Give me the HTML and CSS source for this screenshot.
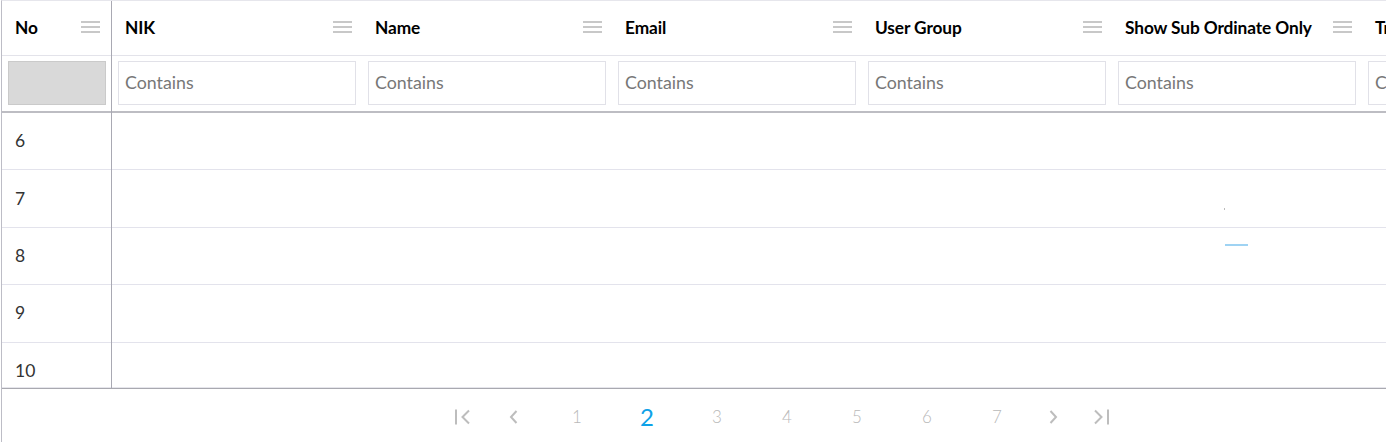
FILE: index.html
```html
<!DOCTYPE html>
<html>
<head>
<meta charset="utf-8">
<link rel="stylesheet" href="styles.css">
</head>
<body>
<div class="grid">
  <div class="table">
    <div class="pinned">
      <div class="hcell"><span class="htext">No</span><span class="menu"><i></i><i></i><i></i></span></div>
      <div class="fcell"><div class="fbox-disabled"></div></div>
      <div class="rows">
        <div class="row"><span class="num">6</span></div>
        <div class="row"><span class="num">7</span></div>
        <div class="row"><span class="num">8</span></div>
        <div class="row"><span class="num">9</span></div>
        <div class="row"><span class="num">10</span></div>
      </div>
    </div>
    <div class="center">
      <div class="hrow">
        <div class="hcell col"><span class="htext">NIK</span><span class="menu"><i></i><i></i><i></i></span></div>
        <div class="hcell col"><span class="htext">Name</span><span class="menu"><i></i><i></i><i></i></span></div>
        <div class="hcell col"><span class="htext">Email</span><span class="menu"><i></i><i></i><i></i></span></div>
        <div class="hcell col"><span class="htext">User Group</span><span class="menu"><i></i><i></i><i></i></span></div>
        <div class="hcell col"><span class="htext">Show Sub Ordinate Only</span><span class="menu"><i></i><i></i><i></i></span></div>
        <div class="hcell col"><span class="htext">Transaction</span><span class="menu"><i></i><i></i><i></i></span></div>
      </div>
      <div class="frow">
        <div class="fcell col"><input class="finput" placeholder="Contains"></div>
        <div class="fcell col"><input class="finput" placeholder="Contains"></div>
        <div class="fcell col"><input class="finput" placeholder="Contains"></div>
        <div class="fcell col"><input class="finput" placeholder="Contains"></div>
        <div class="fcell col"><input class="finput" placeholder="Contains"></div>
        <div class="fcell col"><input class="finput" placeholder="Contains"></div>
      </div>
      <div class="rows">
        <div class="row"></div>
        <div class="row"></div>
        <div class="row"></div>
        <div class="row"></div>
        <div class="row"></div>
      </div>
      <span class="artifact-dot"></span>
      <span class="artifact-line"></span>
    </div>
  </div>
  <div class="pager">
    <span class="pbtn arrow"><svg width="18" height="18" viewBox="0 0 18 18"><path d="M2 1.5v15" stroke="#bdbdbd" stroke-width="2" fill="none"/><path d="M15 2.5L8.5 9l6.5 6.5" stroke="#bdbdbd" stroke-width="2" fill="none"/></svg></span>
    <span class="pbtn arrow"><svg width="12" height="18" viewBox="0 0 12 18"><path d="M9.5 3L4 9l5.5 6" stroke="#bdbdbd" stroke-width="2" fill="none"/></svg></span>
    <span class="pbtn first-num">1</span>
    <span class="pbtn active">2</span>
    <span class="pbtn">3</span>
    <span class="pbtn">4</span>
    <span class="pbtn">5</span>
    <span class="pbtn">6</span>
    <span class="pbtn">7</span>
    <span class="pbtn arrow next"><svg width="12" height="18" viewBox="0 0 12 18"><path d="M2.5 3L8 9l-5.5 6" stroke="#bdbdbd" stroke-width="2" fill="none"/></svg></span>
    <span class="pbtn arrow last"><svg width="18" height="18" viewBox="0 0 18 18"><path d="M3 2.5L9.5 9 3 15.5" stroke="#bdbdbd" stroke-width="2" fill="none"/><path d="M16 1.5v15" stroke="#bdbdbd" stroke-width="2" fill="none"/></svg></span>
  </div>
</div>
</body>
</html>
```

FILE: styles.css
```css
* { box-sizing: border-box; }
html, body { margin: 0; padding: 0; background: #fff; }
body {
  font-family: Lato, "Open Sans", "Liberation Sans", sans-serif;
  width: 1386px;
  height: 442px;
  overflow: hidden;
}
.grid {
  margin-left: 1px;
  border-left: 1px solid #bdbdc6;
  border-top: 1px solid #e6e6ec;
  height: 442px;
  display: flex;
  flex-direction: column;
  overflow: hidden;
}
.table {
  display: flex;
  height: 388px;
  border-bottom: 1px solid #a9a9b0;
  box-shadow: 0 -1px 0 #e6e6ec inset;
  overflow: hidden;
  flex: none;
}
.pinned {
  width: 110px;
  flex: none;
  border-right: 1px solid #a9a9b3;
  display: flex;
  flex-direction: column;
}
.center {
  flex: none;
  width: 1600px;
  display: flex;
  flex-direction: column;
  position: relative;
}
.hrow, .frow { display: flex; }
.col { width: 250px; flex: none; }
.hcell {
  height: 55px;
  border-bottom: 1px solid #e3e3ea;
  display: flex;
  align-items: center;
  justify-content: space-between;
  padding: 0 10px 1px 13px;
  flex: none;
}
.pinned .hcell { padding: 0 11px 1px 13px; }
.htext {
  font-weight: 700;
  font-size: 17.3px;
  color: #000;
  white-space: nowrap;
  letter-spacing: -0.1px;
}
.menu {
  display: flex;
  flex-direction: column;
  gap: 3px;
  width: 19px;
  margin-top: -2px;
}
.menu i {
  display: block;
  height: 2px;
  background: #c8c8c8;
}
.fcell {
  height: 57px;
  border-bottom: 2px solid #bdbdc3;
  padding: 5px 6px 6px 6px;
  flex: none;
}
.pinned .fcell { padding: 5px 5px 6px 6px; }
.fbox-disabled {
  height: 44px;
  background: #d9d9d9;
  border: 1px solid #cacaca;
}
.finput {
  display: block;
  width: 100%;
  height: 44px;
  border: 1px solid #e1e1e8;
  padding: 0 6px 3px 6px;
  font-family: Lato, "Open Sans", "Liberation Sans", sans-serif;
  font-size: 17.8px;
  color: #333;
  background: #fff;
  outline: none;
  margin: 0;
}
.finput::placeholder { color: #777; }
.rows { display: flex; flex-direction: column; }
.row {
  height: 57.4px;
  border-bottom: 1px solid #e3e3ec;
  display: flex;
  align-items: center;
  flex: none;
}
.num {
  font-size: 17.5px;
  color: #333;
  padding-left: 13px;
  padding-bottom: 1px;
}
.center .row { width: 1600px; }
.artifact-dot {
  position: absolute;
  left: 1112px;
  top: 207px;
  width: 1px;
  height: 2px;
  background: #bbb;
}
.artifact-line {
  position: absolute;
  left: 1113px;
  top: 243px;
  width: 23px;
  height: 2px;
  background: #9fd3f3;
}
.pager {
  flex: 1;
  display: flex;
  align-items: center;
  padding-left: 436px;
  padding-top: 2px;
}
.pbtn {
  width: 70px;
  text-align: center;
  font-size: 17px;
  font-weight: 300;
  color: #b9b9b9;
  display: flex;
  justify-content: center;
  align-items: center;
  height: 30px;
  flex: none;
}
.pbtn.arrow { width: 50px; }
.pbtn.first-num { margin-left: 4px; }
.pbtn.next { margin-left: -2px; width: 47px; }
.pbtn.last { width: 47px; }
.pbtn.active {
  color: #0ea2e8;
  font-size: 24px;
  font-weight: 400;
}
```
